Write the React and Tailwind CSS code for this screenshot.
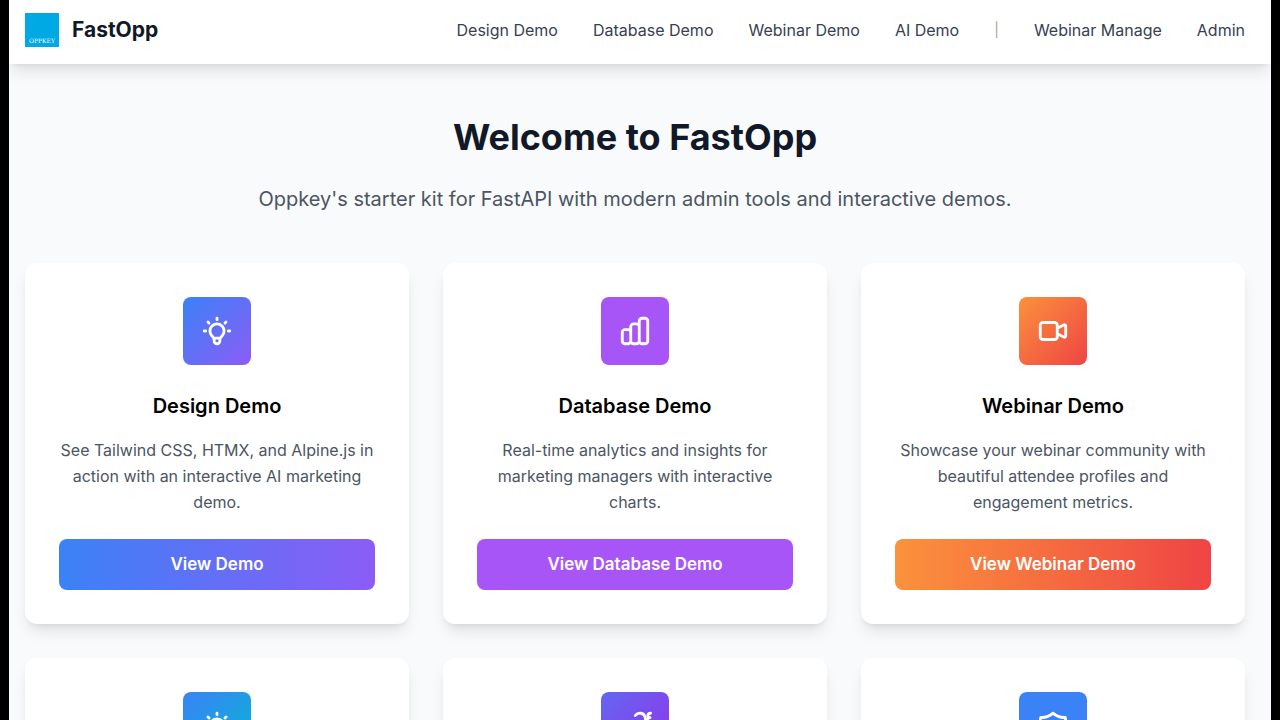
const paths = {
  bulb: 'M9.663 17h4.673M12 3v1m6.364 1.636l-.707.707M21 12h-1M4 12H3m3.343-5.657l-.707-.707m2.828 9.9a5 5 0 117.072 0l-.548.547A3.374 3.374 0 0014 18.469V19a2 2 0 11-4 0v-.531c0-.895-.356-1.754-.988-2.386l-.548-.547z',
  chart: 'M9 19v-6a2 2 0 00-2-2H5a2 2 0 00-2 2v6a2 2 0 002 2h2a2 2 0 002-2zm0 0V9a2 2 0 012-2h2a2 2 0 012 2v10m-6 0a2 2 0 002 2h2a2 2 0 002-2m0 0V5a2 2 0 012-2h2a2 2 0 012 2v14a2 2 0 01-2 2h-2a2 2 0 01-2-2z',
  video: 'M15 10l4.553-2.276A1 1 0 0121 8.618v6.764a1 1 0 01-1.447.894L15 14M5 18h8a2 2 0 002-2V8a2 2 0 00-2-2H5a2 2 0 00-2 2v8a2 2 0 002 2z',
  curves: 'M12.2 4.6C13.8 2.4 18 2.2 19 5.4c.5 1.600 .6 3 .6 5M23 3c-2.500 .1-2.500 2.800-.4 3.100M19.600 8.500c1-1.600 2-2.200 3-2.400',
  shield: 'M9 12l2 2 4-4m5.618-4.016A11.955 11.955 0 0112 2.944a11.955 11.955 0 01-8.618 3.04A12.02 12.02 0 003 9c0 5.591 3.824 10.29 9 11.622 5.176-1.332 9-6.03 9-11.622 0-1.042-.133-2.052-.382-3.016z',
};

const demos = [
  {
    title: 'Design Demo',
    text: 'See Tailwind CSS, HTMX, and Alpine.js in action with an interactive AI marketing demo.',
    action: 'View Demo',
    icon: 'bulb',
    tile: 'bg-linear-to-br/srgb from-[#3b82f6] to-[#8b5cf6]',
    button: 'bg-linear-to-r/srgb from-[#3b82f6] to-[#8b5cf6]',
  },
  {
    title: 'Database Demo',
    text: 'Real-time analytics and insights for marketing managers with interactive charts.',
    action: 'View Database Demo',
    icon: 'chart',
    tile: 'bg-[#a855f7]',
    button: 'bg-[#a855f7]',
  },
  {
    title: 'Webinar Demo',
    text: 'Showcase your webinar community with beautiful attendee profiles and engagement metrics.',
    action: 'View Webinar Demo',
    icon: 'video',
    tile: 'bg-linear-to-br/srgb from-[#fb923c] to-[#ef4444]',
    button: 'bg-linear-to-r/srgb from-[#fb923c] to-[#ef4444]',
  },
];

const more = [
  { icon: 'bulb', tile: 'bg-linear-to-br/srgb from-[#3b82f6] to-[#06b6d4]' },
  { icon: 'curves', tile: 'bg-linear-to-br/srgb from-[#6366f1] to-[#9333ea]' },
  { icon: 'shield', tile: 'bg-[#3b82f6]' },
];

const links = ['Design Demo', 'Database Demo', 'Webinar Demo', 'AI Demo'];
const adminLinks = ['Webinar Manage', 'Admin'];

function NavLink({ children }) {
  return (
    <a href="#" className="hover:text-[#111827]">
      {children}
    </a>
  );
}

function Card({ icon, tile, children }) {
  return (
    <article className="flex flex-col items-center rounded-xl bg-white p-[34px] text-center shadow-lg">
      <div className={`flex size-[68px] items-center justify-center rounded-lg ${tile}`}>
        <svg
          viewBox="0 0 24 24"
          aria-hidden="true"
          className="size-[34px] fill-none stroke-white stroke-2"
          strokeLinecap="round"
          strokeLinejoin="round"
        >
          <path d={paths[icon]} />
        </svg>
      </div>
      {children}
    </article>
  );
}

export default function App() {
  return (
    <div className="h-screen overflow-hidden bg-black px-[9px] font-['Inter','Liberation_Sans',sans-serif]">
      <div className="min-h-full bg-[#f9fafb]">
        <header className="relative flex h-16 items-center justify-between bg-white pr-[26px] pb-1 pl-4 shadow-lg">
          <a href="#" className="flex items-center gap-[13px]">
            <span className="flex size-[34px] items-end justify-center bg-[#00a9e4] pb-0.5 font-['DejaVu_Serif',serif] text-[6px] leading-[8px] text-white">
              OPPKEY
            </span>
            <span className="text-[21px] font-bold text-[#111827]">FastOpp</span>
          </a>
          <nav className="flex items-center gap-[35px] text-[16px] text-[#374151]">
            {links.map((l) => (
              <NavLink key={l}>{l}</NavLink>
            ))}
            <span className="text-sm text-[#9ca3af]">|</span>
            {adminLinks.map((l) => (
              <NavLink key={l}>{l}</NavLink>
            ))}
          </nav>
        </header>
        <main className="pt-[52px] pr-[26px] pl-4">
          <div className="text-center">
            <h1 className="text-[36px] leading-[42px] font-bold text-[#111827]">Welcome to FastOpp</h1>
            <p className="mt-[26px] text-[20px] leading-[30px] text-[#4b5563]">
              Oppkey's starter kit for FastAPI with modern admin tools and interactive demos.
            </p>
          </div>
          <div className="mt-[49px] grid grid-cols-3 gap-[34px]">
            {demos.map((d) => (
              <Card key={d.title} icon={d.icon} tile={d.tile}>
                <h2 className="mt-[26px] text-[20px] leading-[30px] font-semibold text-black">{d.title}</h2>
                <p className="mt-4 text-[16px] leading-[26px] text-[#4b5563]">{d.text}</p>
                <a
                  href="#"
                  className={`mt-6 w-full rounded-lg py-3 text-[17px] leading-[27px] font-semibold text-white ${d.button}`}
                >
                  {d.action}
                </a>
              </Card>
            ))}
            {more.map((d) => (
              <Card key={d.icon} icon={d.icon} tile={d.tile} />
            ))}
          </div>
        </main>
      </div>
    </div>
  );
}
